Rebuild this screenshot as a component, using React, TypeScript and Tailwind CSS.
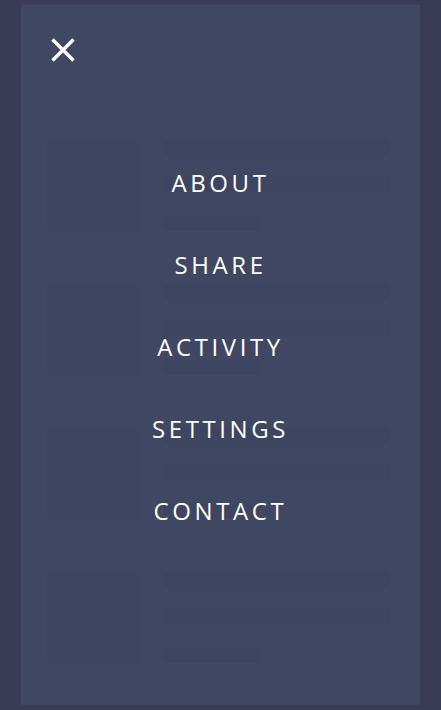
import React from "react";

const cards = [0, 1, 2, 3];

function SkeletonCard() {
  return (
    <div className="flex h-[144px] gap-[27px] pl-[27px]">
      <div className="mt-[2px] h-[85px] w-[90px] rounded-[2px] bg-[#3f4661] shadow-[0_0_2px_rgba(40,44,66,0.2)]" />
      <div className="flex flex-col gap-[25px]">
        <div className="h-[12px] w-[223px] rounded-[2px] bg-[#3e4560] shadow-[0_0_2px_rgba(40,44,66,0.25)]" />
        <div className="h-[12px] w-[223px] rounded-[2px] bg-[#3e4560] shadow-[0_0_2px_rgba(40,44,66,0.25)]" />
        <div className="mt-[2px] h-[12px] w-[93px] rounded-[2px] bg-[#3e4560] shadow-[0_0_2px_rgba(40,44,66,0.25)]" />
      </div>
    </div>
  );
}

export default function App() {
  const items = ["ABOUT", "SHARE", "ACTIVITY", "SETTINGS", "CONTACT"];
  return (
    <div className="h-[710px] w-[441px] overflow-hidden bg-[#3a3c57] pl-[21px] pt-[5px] font-['Open_Sans',sans-serif]">
      <div className="relative h-[700px] w-[399px] bg-[#404762]">
        <div className="flex flex-col pt-[136px]">
          {cards.map((c) => (
            <SkeletonCard key={c} />
          ))}
        </div>
        <div className="absolute inset-0 flex flex-col">
          <div className="pl-[30px] pt-[33px]">
            <svg width="24" height="24" viewBox="0 0 24 24" className="block">
              <path d="M1.5 1.5 L22.5 22.5 M22.5 1.5 L1.5 22.5" stroke="#ffffff" strokeWidth="3.4" fill="none" />
            </svg>
          </div>
          <nav className="mt-[80px] flex flex-col">
            {items.map((it) => (
              <a
                key={it}
                className="flex h-[82px] items-center justify-center text-[24px] leading-[82px] tracking-[3.6px] text-white"
              >
                {it}
              </a>
            ))}
          </nav>
        </div>
      </div>
    </div>
  );
}
